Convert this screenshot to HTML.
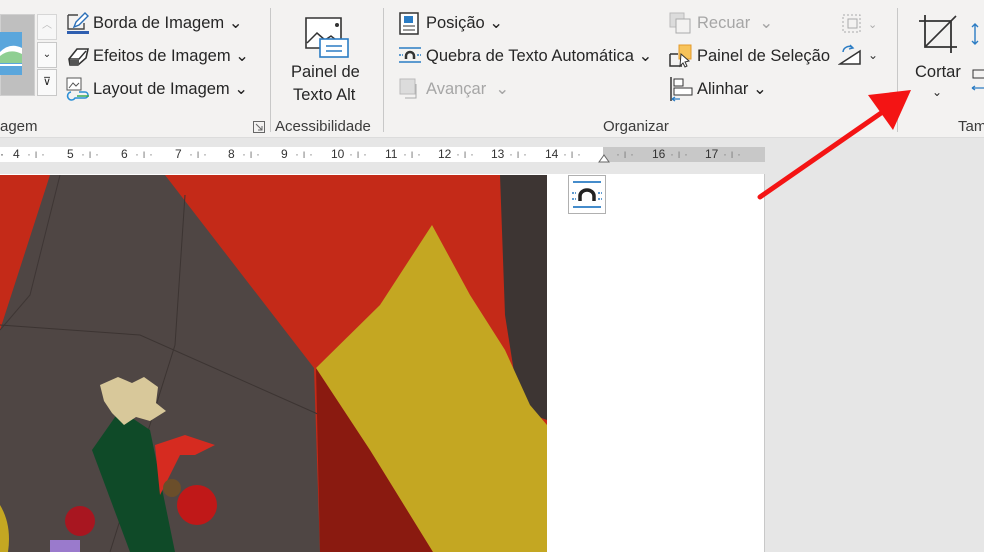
<!DOCTYPE html>
<html><head><meta charset="utf-8"><style>
*{margin:0;padding:0;box-sizing:border-box}
body{width:984px;height:552px;overflow:hidden;background:#e6e6e6;position:relative;font-family:"Liberation Sans",sans-serif;color:#262626}
.rib{position:absolute;left:0;top:0;width:984px;height:138px;background:#f3f2f1;border-bottom:1px solid #dcdcdc}
.t{position:absolute;font-size:16.5px;white-space:nowrap;line-height:20px}
.g{color:#a6a6a6}
.sep{position:absolute;top:8px;width:1px;height:124px;background:#c8c8c8}
.lbl{position:absolute;top:118px;font-size:15px;white-space:nowrap;color:#3b3b3b}
.ab{position:absolute;}
</style></head><body>
<div class="rib">
 <div class="ab" style="left:0;top:14px;width:35px;height:82px;background:#bfbfbf;border:1px solid #d0d0d0"></div>
 <svg class="ab" style="left:0;top:32px" width="22" height="43"><rect width="22" height="43" fill="#5aa6dc"/><path d="M0 20 Q10 10 22 16 L22 30 L0 30Z" fill="#fff"/><path d="M0 24 Q10 16 22 22 L22 31 L0 31Z" fill="#8fcf92"/><path d="M0 33 H22" stroke="#fff" stroke-width="2"/></svg>
 <div class="ab" style="left:37px;top:14px;width:20px;height:26px;border:1px solid #d6d6d6;background:#f7f7f7;color:#bbb;font-size:10px;text-align:center;line-height:22px">︿</div>
 <div class="ab" style="left:37px;top:42px;width:20px;height:26px;border:1px solid #c8c8c8;background:#fafafa;font-size:10px;text-align:center;line-height:24px">⌄</div>
 <div class="ab" style="left:37px;top:69px;width:20px;height:27px;border:1px solid #c8c8c8;background:#fafafa;font-size:11px;text-align:center;line-height:24px">⊽</div>
 <svg class="ab" style="left:66px;top:11px" width="24" height="24"><path d="M2 4h10M2 4v14h16v-6" stroke="#444" fill="none" stroke-width="1.4"/><path d="M8 16l2-5 9-9 3 3-9 9z" stroke="#2a6fb8" fill="#fff" stroke-width="1.4"/><rect x="1" y="20" width="22" height="3" fill="#2f5fb0"/></svg>
 <div class="t" style="left:93px;top:13px">Borda de Imagem ⌄</div>
 <svg class="ab" style="left:66px;top:45px" width="24" height="22"><path d="M3 14l8-10h11l-2 9-8 7H4z" fill="#fff" stroke="#333" stroke-width="1.6"/><path d="M3 14h10l7-8" stroke="#333" fill="none" stroke-width="1.4"/><path d="M4 15h9v5H4z" fill="#555"/></svg>
 <div class="t" style="left:93px;top:46px">Efeitos de Imagem ⌄</div>
 <svg class="ab" style="left:66px;top:77px" width="24" height="24"><rect x="1" y="1" width="14" height="12" fill="#fff" stroke="#555"/><path d="M3 11l4-5 3 3 3-3" stroke="#555" fill="none"/><path d="M5 15a4 4 0 1 0 4 6h10a3 3 0 0 0 0-6h-6" stroke="#2b8fd6" fill="none" stroke-width="1.5"/><path d="M11 19h12" stroke="#3aaa55" stroke-width="1.5"/></svg>
 <div class="t" style="left:93px;top:79px">Layout de Imagem ⌄</div>
 <div class="lbl" style="left:0">agem</div>
 <svg class="ab" style="left:253px;top:121px" width="12" height="12"><rect x=".5" y=".5" width="11" height="11" fill="none" stroke="#666"/><path d="M3 3l6 6M9 5v4H5" stroke="#666" fill="none"/></svg>
 <div class="sep" style="left:270px"></div>
 <svg class="ab" style="left:305px;top:17px" width="44" height="42"><path d="M1 1h35v30H1z" fill="#fff" stroke="#333" stroke-width="1.6"/><path d="M2 26l10-10 8 7 6-4 9 7" stroke="#333" fill="none" stroke-width="1.5"/><circle cx="32" cy="8" r="2" fill="#333"/><rect x="15" y="22" width="28" height="18" fill="#fff" stroke="#2b7cc4" stroke-width="1.6"/><path d="M21 29h16M21 34h16" stroke="#2b7cc4" stroke-width="1.5"/></svg>
 <div class="t" style="left:291px;top:62px">Painel de</div>
 <div class="t" style="left:293px;top:85px">Texto Alt</div>
 <div class="lbl" style="left:275px">Acessibilidade</div>
 <div class="sep" style="left:383px"></div>
 <svg class="ab" style="left:399px;top:12px" width="22" height="24"><rect x="1" y="1" width="18" height="21" fill="#fff" stroke="#333" stroke-width="1.5"/><rect x="5" y="4" width="9" height="7" fill="#2b7cc4"/><path d="M4 14h12M4 18h12" stroke="#333"/></svg>
 <div class="t" style="left:426px;top:13px">Posição ⌄</div>
 <svg class="ab" style="left:398px;top:46px" width="24" height="18"><path d="M1 2h22M1 16h22" stroke="#2b7cc4" stroke-width="1.6"/><path d="M1 9h4M19 9h4" stroke="#2b7cc4" stroke-width="1.6" stroke-dasharray="2 1"/><path d="M8 13v-3a4 4 0 0 1 8 0v3" stroke="#333" fill="none" stroke-width="2.5"/></svg>
 <div class="t" style="left:426px;top:46px">Quebra de Texto Automática ⌄</div>
 <svg class="ab" style="left:399px;top:78px" width="22" height="22"><rect x="1" y="1" width="15" height="15" fill="#dcdcdc" stroke="#bbb"/><path d="M17 6v14H6" stroke="#aaa" fill="none"/></svg>
 <div class="t g" style="left:426px;top:79px">Avançar &nbsp;⌄</div>
 <svg class="ab" style="left:669px;top:12px" width="24" height="22"><rect x="1" y="1" width="14" height="14" fill="#dcdcdc" stroke="#bbb"/><rect x="7" y="7" width="14" height="14" fill="#f3f2f1" stroke="#aaa"/></svg>
 <div class="t g" style="left:697px;top:13px">Recuar &nbsp;⌄</div>
 <svg class="ab" style="left:669px;top:44px" width="26" height="24"><rect x="10" y="1" width="12" height="14" fill="#f7c35a" stroke="#e39a2b"/><path d="M1 10v12h12" stroke="#333" fill="none" stroke-width="1.5"/><path d="M1 10h8" stroke="#333" stroke-width="1.5"/><path d="M12 10l8 7-4 1 2 4-2 1-2-4-3 3z" fill="#fff" stroke="#333"/></svg>
 <div class="t" style="left:697px;top:46px">Painel de Seleção</div>
 <svg class="ab" style="left:669px;top:76px" width="24" height="26"><path d="M2 1v24" stroke="#333" stroke-width="1.5"/><rect x="5" y="3" width="9" height="7" fill="#fff" stroke="#333"/><rect x="5" y="12" width="18" height="7" fill="#fff" stroke="#333"/><path d="M3 23h8M3 23l3-2M3 23l3 2" stroke="#2b7cc4" stroke-width="1.3"/></svg>
 <div class="t" style="left:697px;top:79px">Alinhar ⌄</div>
 <svg class="ab" style="left:840px;top:12px" width="40" height="24"><rect x="3" y="3" width="17" height="17" fill="none" stroke="#aaa" stroke-dasharray="2 2"/><rect x="8" y="7" width="9" height="9" fill="none" stroke="#aaa"/><text x="28" y="16" font-size="11" fill="#aaa">⌄</text></svg>
 <svg class="ab" style="left:838px;top:44px" width="42" height="22"><path d="M2 20l20-13v13z" fill="#fff" stroke="#333" stroke-width="1.5"/><path d="M5 8a6 6 0 0 1 10-4" stroke="#2b7cc4" fill="none" stroke-width="1.5"/><path d="M12 1l3 3-4 1" stroke="#2b7cc4" fill="none" stroke-width="1.4"/><text x="30" y="15" font-size="12" fill="#333">⌄</text></svg>
 <div class="lbl" style="left:603px">Organizar</div>
 <div class="sep" style="left:897px"></div>
 <svg class="ab" style="left:918px;top:14px" width="42" height="42"><path d="M7 1v32h32M1 7h32v32" stroke="#333" fill="none" stroke-width="1.8"/><path d="M7 33L38 2" stroke="#333" stroke-width="1.6"/></svg>
 <div class="t" style="left:915px;top:62px">Cortar</div>
 <div class="t" style="left:932px;top:82px;font-size:12px">⌄</div>
 <svg class="ab" style="left:970px;top:22px" width="14" height="70"><path d="M5 2v20M2 5l3-3 3 3M2 19l3 3 3-3" stroke="#2b7cc4" fill="none" stroke-width="1.4"/><rect x="3" y="48" width="14" height="8" fill="none" stroke="#333"/><path d="M2 66h12M2 66l3-2M2 66l3 2" stroke="#2b7cc4" stroke-width="1.3"/></svg>
 <div class="lbl" style="left:958px">Tam</div>
</div>
<div class="ab" style="left:0;top:147px;width:603px;height:15px;background:#fff"></div>
<div class="ab" style="left:603px;top:147px;width:162px;height:15px;background:#c8c8c8"></div>
<div class="ab" style="left:0;top:147px;height:15px;width:765px;font-size:12px;line-height:15px;color:#333;white-space:nowrap;letter-spacing:0">
<span class="ab" style="left:0">·</span>
<span class="ab" style="left:13px">4</span><span class="ab" style="left:67px">5</span><span class="ab" style="left:121px">6</span><span class="ab" style="left:175px">7</span><span class="ab" style="left:228px">8</span><span class="ab" style="left:281px">9</span><span class="ab" style="left:331px">10</span><span class="ab" style="left:385px">11</span><span class="ab" style="left:438px">12</span><span class="ab" style="left:491px">13</span><span class="ab" style="left:545px">14</span><span class="ab" style="left:652px">16</span><span class="ab" style="left:705px">17</span>
<span class="ab" style="left:27px;color:#888">· ı ·</span><span class="ab" style="left:81px;color:#888">· ı ·</span><span class="ab" style="left:135px;color:#888">· ı ·</span><span class="ab" style="left:189px;color:#888">· ı ·</span><span class="ab" style="left:242px;color:#888">· ı ·</span><span class="ab" style="left:295px;color:#888">· ı ·</span><span class="ab" style="left:349px;color:#888">· ı ·</span><span class="ab" style="left:403px;color:#888">· ı ·</span><span class="ab" style="left:456px;color:#888">· ı ·</span><span class="ab" style="left:509px;color:#888">· ı ·</span><span class="ab" style="left:563px;color:#888">· ı ·</span><span class="ab" style="left:616px;color:#888">· ı ·</span><span class="ab" style="left:670px;color:#888">· ı ·</span><span class="ab" style="left:723px;color:#888">· ı ·</span>
</div>
<svg class="ab" style="left:598px;top:152px" width="12" height="12"><path d="M1 10L6 3l5 7z" fill="#fff" stroke="#666"/></svg>
<div class="ab" style="left:0;top:174px;width:765px;height:378px;background:#fff;border-right:1px solid #c8c8c8"></div>
<svg class="ab" style="left:0;top:175px" width="547" height="377">
<rect width="547" height="377" fill="#c42a18"/>
<path d="M50 0H165L314 193 320 377H0V155Z" fill="#4f4644"/>
<path d="M60 0L30 120 0 155" stroke="#3e3634" fill="none"/>
<path d="M185 20L175 170 110 377M0 150L140 160 320 240" stroke="#3c3432" fill="none"/>
<path d="M316 193L370 275 433 377H320Z" fill="#8a1a10"/>
<path d="M500 0H547V245L520 235 505 140Z" fill="#3d3533"/>
<path d="M432 50L470 120 505 175 530 230 547 250V377H433L370 275 316 193 380 130Z" fill="#c4a722"/>
<path d="M130 377L92 275 120 235 150 255 175 377Z" fill="#0f4a28"/>
<path d="M100 210l18-8 14 6 12-6 14 10-2 16 10 8-16 10-14-4-12 8-12-12-8-12z" fill="#d8c89a"/>
<path d="M155 270l30-10 30 10-20 10-15 0-20 40z" fill="#d62b20"/>
<circle cx="197" cy="330" r="20" fill="#c01818"/><circle cx="80" cy="346" r="15" fill="#a81620"/>
<circle cx="172" cy="313" r="9" fill="#6b4e2a"/>
<rect x="50" y="365" width="30" height="12" fill="#9a7acc"/>
<path d="M0 330q12 20 8 47H0z" fill="#c4a722"/>
</svg>
<div class="ab" style="left:568px;top:175px;width:38px;height:39px;border:1px solid #b0b0b0;background:#fff"></div>
<svg class="ab" style="left:571px;top:180px" width="32" height="32"><path d="M2 2h28M2 27h28" stroke="#2b7cc4" stroke-width="1.8"/><path d="M1 13h4M27 13h4M1 19h4M27 19h4" stroke="#2b7cc4" stroke-width="1.6" stroke-dasharray="2 1"/><path d="M9 21v-5a7 6 0 0 1 14 0v5" stroke="#222" fill="none" stroke-width="3.5"/></svg>
<svg class="ab" style="left:0;top:0" width="984" height="552" pointer-events="none"><path d="M760 197L884 111" stroke="#f41414" stroke-width="5" stroke-linecap="round"/><path d="M911 90L868 95L893 130Z" fill="#f41414"/></svg>
</body></html>
